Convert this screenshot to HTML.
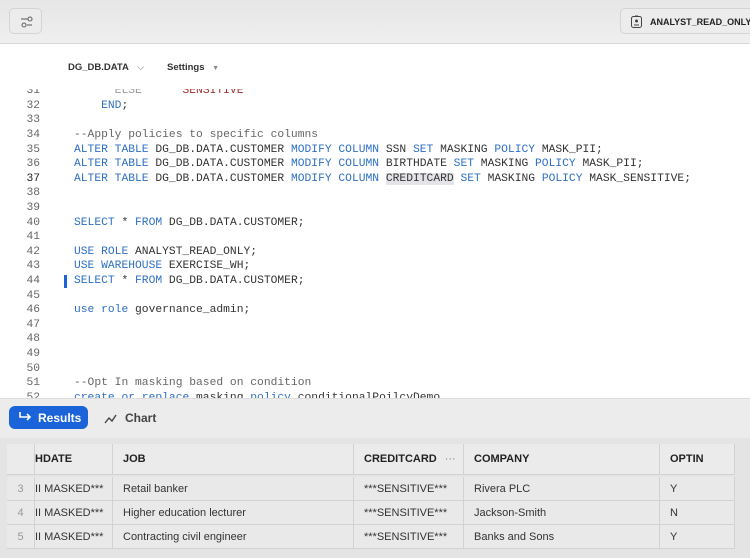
<!DOCTYPE html>
<html><head><meta charset="utf-8"><style>
*{margin:0;padding:0;box-sizing:border-box}
body{width:750px;height:558px;overflow:hidden;background:#fff;font-family:"Liberation Sans",sans-serif;position:relative}
.hdr{position:absolute;left:0;top:0;width:750px;height:44px;background:linear-gradient(#e6e6e6,#efefef);border-bottom:1px solid #d8d8d8}
.btn{position:absolute;left:9px;top:8px;width:33px;height:26px;border:1px solid #d4d4d4;border-radius:5px;background:#ececec}
.role{position:absolute;left:620px;top:8px;width:140px;height:26px;border:1px solid #d4d4d4;border-radius:5px;background:#ececec;font-size:9px;font-weight:bold;color:#222;padding:8px 0 0 29px;white-space:nowrap}
.tabs{position:absolute;top:62px;font-size:9.5px;color:#333;font-weight:bold}
.code{position:absolute;left:0;top:89px;width:750px;height:309px;overflow:hidden;font-family:"Liberation Mono",monospace;font-size:11.3px;color:#333}
.l{position:absolute;left:0;height:14.6px;line-height:14.6px;white-space:pre;width:750px}
.n{position:absolute;left:0;width:40px;text-align:right;color:#666}
.t{position:absolute;left:74px}
.k{color:#2d6fc4}
.c{color:#666}
.bar{position:absolute;left:0;top:398px;width:750px;height:40px;background:#ececec;border-top:1px solid #ddd}
.res{position:absolute;left:9px;top:406px;width:79px;height:23px;background:#1a63d8;border-radius:6px;color:#fff;font-size:12px;font-weight:bold;padding:5px 0 0 29px;white-space:nowrap}
.chart{position:absolute;left:104px;top:411px;font-size:12px;color:#444;font-weight:bold}
.tbl{position:absolute;left:0;top:438px;width:750px;height:120px;background:#e4e4e4}
.row{position:absolute;left:7px;width:728px;background:#e9e9e9;border-bottom:1px solid #d2d2d2;font-size:11px;color:#333}
.cell{position:absolute;top:0;height:100%;border-right:1px solid #d2d2d2;padding-left:10px;display:flex;align-items:center;white-space:nowrap}
.h .cell{font-weight:bold;color:#222}
</style></head><body>
<div class="hdr"></div>
<div class="btn"><svg width="33" height="26" viewBox="0 0 33 26"><g stroke="#666" fill="none" stroke-width="1.1"><line x1="11" y1="10" x2="18" y2="10"/><circle cx="20" cy="10" r="2"/><line x1="17" y1="16" x2="22" y2="16"/><circle cx="14" cy="16" r="2"/></g></svg></div>
<div class="role"><svg style="position:absolute;left:10px;top:6px" width="11" height="13" viewBox="0 0 11 13"><rect x="0.5" y="1.5" width="10" height="11" rx="2" fill="none" stroke="#444"/><circle cx="5.5" cy="6" r="1.5" fill="#444"/><path d="M3 10h5" stroke="#444"/><path d="M4 1h3" stroke="#444"/></svg>ANALYST_READ_ONLY</div>
<div class="tabs" style="left:68px">DG_DB.DATA <span style="color:#888;font-weight:normal;margin-left:6px">⌵</span></div>
<div class="tabs" style="left:167px;font-weight:bold">Settings <span style="color:#888;font-size:7px;margin-left:5px">▼</span></div>
<div class="code">
<div class="l" style="top:-5px"><span class="n">31</span><span class="t" style="color:#999">      ELSE     <span style="color:#a33">'SENSITIVE'</span></span></div>
<div class="l" style="top:9.7px"><span class="n">32</span><span class="t">    <span class="k">END</span>;</span></div>
<div class="l" style="top:24.3px"><span class="n">33</span></div>
<div class="l" style="top:38.9px"><span class="n">34</span><span class="t c">--Apply policies to specific columns</span></div>
<div class="l" style="top:53.5px"><span class="n">35</span><span class="t"><span class="k">ALTER TABLE</span> DG_DB.DATA.CUSTOMER <span class="k">MODIFY COLUMN</span> SSN <span class="k">SET</span> MASKING <span class="k">POLICY</span> MASK_PII;</span></div>
<div class="l" style="top:68.1px"><span class="n">36</span><span class="t"><span class="k">ALTER TABLE</span> DG_DB.DATA.CUSTOMER <span class="k">MODIFY COLUMN</span> BIRTHDATE <span class="k">SET</span> MASKING <span class="k">POLICY</span> MASK_PII;</span></div>
<div class="l" style="top:82.7px"><span class="n" style="color:#222">37</span><span class="t"><span class="k">ALTER TABLE</span> DG_DB.DATA.CUSTOMER <span class="k">MODIFY COLUMN</span> <span style="background:#e4e4e8">CREDITCARD</span> <span class="k">SET</span> MASKING <span class="k">POLICY</span> MASK_SENSITIVE;</span></div>
<div class="l" style="top:97.3px"><span class="n">38</span></div>
<div class="l" style="top:111.9px"><span class="n">39</span></div>
<div class="l" style="top:126.5px"><span class="n">40</span><span class="t"><span class="k">SELECT</span> * <span class="k">FROM</span> DG_DB.DATA.CUSTOMER;</span></div>
<div class="l" style="top:141.1px"><span class="n">41</span></div>
<div class="l" style="top:155.7px"><span class="n">42</span><span class="t"><span class="k">USE ROLE</span> ANALYST_READ_ONLY;</span></div>
<div class="l" style="top:170.3px"><span class="n">43</span><span class="t"><span class="k">USE WAREHOUSE</span> EXERCISE_WH;</span></div>
<div class="l" style="top:184.9px"><span class="n">44</span><span style="position:absolute;left:64px;top:1px;width:3px;height:13px;background:#1a63d8"></span><span class="t"><span class="k">SELECT</span> * <span class="k">FROM</span> DG_DB.DATA.CUSTOMER;</span></div>
<div class="l" style="top:199.5px"><span class="n">45</span></div>
<div class="l" style="top:214.1px"><span class="n">46</span><span class="t"><span class="k">use role</span> governance_admin;</span></div>
<div class="l" style="top:228.7px"><span class="n">47</span></div>
<div class="l" style="top:243.3px"><span class="n">48</span></div>
<div class="l" style="top:257.9px"><span class="n">49</span></div>
<div class="l" style="top:272.5px"><span class="n">50</span></div>
<div class="l" style="top:287.1px"><span class="n">51</span><span class="t c">--Opt In masking based on condition</span></div>
<div class="l" style="top:301.7px"><span class="n">52</span><span class="t"><span class="k">create or replace</span> masking <span class="k">policy</span> conditionalPoilcyDemo</span></div>
</div>
<div class="bar"></div>
<div class="res"><svg style="position:absolute;left:9px;top:5px" width="14" height="12" viewBox="0 0 14 12"><path d="M2 1v5h10M9 3l3 3-3 3" stroke="#fff" stroke-width="1.6" fill="none"/></svg>Results</div>
<div class="chart"><svg style="vertical-align:-2px;margin-right:8px" width="13" height="10" viewBox="0 0 13 10"><path d="M1 9l4-5 3 3 4-6" stroke="#444" stroke-width="1.4" fill="none"/></svg>Chart</div>
<div class="tbl">
<div class="row h" style="top:6px;height:31px;background:#ebebeb">
<div class="cell" style="left:0;width:28px"></div>
<div class="cell" style="left:28px;width:78px;padding-left:0">HDATE</div>
<div class="cell" style="left:106px;width:241px">JOB</div>
<div class="cell" style="left:347px;width:110px">CREDITCARD <span style="color:#888;margin-left:8px;font-weight:normal">···</span></div>
<div class="cell" style="left:457px;width:196px">COMPANY</div>
<div class="cell" style="left:653px;width:75px">OPTIN</div>
</div>
<div class="row" style="top:39px;height:24px">
<div class="cell" style="left:0;width:28px;color:#999;justify-content:center;padding:0">3</div>
<div class="cell" style="left:28px;width:78px;padding-left:0">II MASKED***</div>
<div class="cell" style="left:106px;width:241px">Retail banker</div>
<div class="cell" style="left:347px;width:110px">***SENSITIVE***</div>
<div class="cell" style="left:457px;width:196px">Rivera PLC</div>
<div class="cell" style="left:653px;width:75px">Y</div>
</div>
<div class="row" style="top:63px;height:24px">
<div class="cell" style="left:0;width:28px;color:#999;justify-content:center;padding:0">4</div>
<div class="cell" style="left:28px;width:78px;padding-left:0">II MASKED***</div>
<div class="cell" style="left:106px;width:241px">Higher education lecturer</div>
<div class="cell" style="left:347px;width:110px">***SENSITIVE***</div>
<div class="cell" style="left:457px;width:196px">Jackson-Smith</div>
<div class="cell" style="left:653px;width:75px">N</div>
</div>
<div class="row" style="top:87px;height:24px">
<div class="cell" style="left:0;width:28px;color:#999;justify-content:center;padding:0">5</div>
<div class="cell" style="left:28px;width:78px;padding-left:0">II MASKED***</div>
<div class="cell" style="left:106px;width:241px">Contracting civil engineer</div>
<div class="cell" style="left:347px;width:110px">***SENSITIVE***</div>
<div class="cell" style="left:457px;width:196px">Banks and Sons</div>
<div class="cell" style="left:653px;width:75px">Y</div>
</div>
</div>
</body></html>
